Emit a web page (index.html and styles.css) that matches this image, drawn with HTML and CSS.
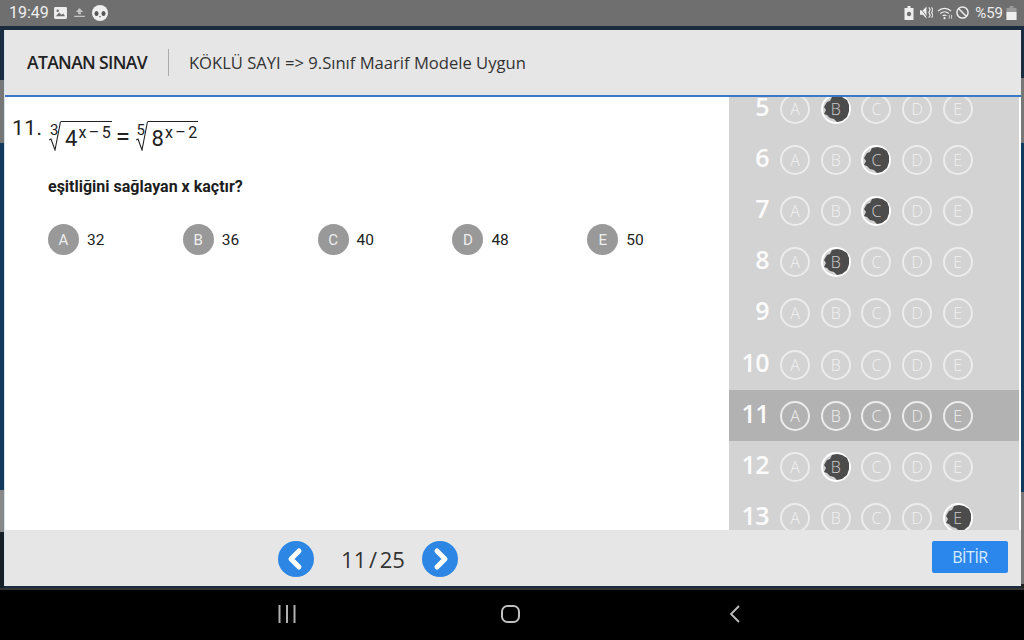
FILE: index.html
```html
<!DOCTYPE html>
<html lang="tr">
<head>
<meta charset="utf-8">
<title>Atanan Sınav</title>
<link rel="stylesheet" href="styles.css">
</head>
<body>
<svg class="defs" width="0" height="0" aria-hidden="true">
  <symbol id="blob" viewBox="0 0 30 30">
    <path d="M3 13 L6 8 L9 7 L11 3 L16 2 L21 3 L26 6 L28 11 L28 17 L26 23 L21 27 L16 28 L13 25 L9 24 L6 21 L3 20 L5 16 Z"/>
  </symbol>
</svg>
<div class="status">
  <div class="status-left">
    <span class="clock">19:49</span>
    <svg class="ic" width="13" height="12" viewBox="0 0 14 13"><rect width="14" height="13" rx="1.5" fill="#eee"/><path d="M2 10 L5.5 6 L8 8.5 L10 7 L12 10Z" fill="#6f6f6f"/><circle cx="4" cy="4" r="1.3" fill="#6f6f6f"/></svg>
    <svg class="ic" width="11" height="9" viewBox="0 0 12 10"><path d="M6 0 L10 4.5 H7.5 V7 H4.500 V4.500 H2Z M0 8.500 H12 V10 H0Z" fill="#c4c4c4"/></svg>
    <svg class="ic" width="16" height="16" viewBox="0 0 16 16"><circle cx="8" cy="8" r="8" fill="#eee"/><ellipse cx="4.500" cy="8.500" rx="2" ry="2.500" fill="#555"/><ellipse cx="11.500" cy="8.500" rx="2" ry="2.500" fill="#555"/><path d="M7 11 H9 L8 12.500Z" fill="#555"/></svg>
  </div>
  <div class="status-right">
    <svg width="10" height="14" viewBox="0 0 9 14"><path d="M3 0 H6 V2 H9 V14 H0 V2 H3Z" fill="#eee"/><circle cx="4.500" cy="8" r="2.200" fill="#6f6f6f"/></svg>
    <svg class="s-mute" width="13" height="13" viewBox="0 0 14 13"><path d="M0 4 H3 L7 0 V13 L3 9 H0Z" fill="#eee"/><path d="M0 1 L8 12" stroke="#6f6f6f" stroke-width="1"/><path d="M9.500 1 L11 3.500 L9.500 6.500 L11 9.500 L9.500 12 M12.500 1 L14 3.500 L12.500 6.500 L14 9.500 L12.500 12" fill="none" stroke="#eee" stroke-width="1.200"/></svg>
    <svg width="16" height="14" viewBox="0 0 17 14"><path d="M1 5 A10 10 0 0 1 15 5 M3.500 7.500 A7 7 0 0 1 12.500 7.500 M6 10 A3.500 3.500 0 0 1 10 10" fill="none" stroke="#eee" stroke-width="1.300"/><circle cx="8" cy="12.500" r="1.200" fill="#eee"/><path d="M13 9 V13 M15.500 9 V13" stroke="#ddd"/></svg>
    <svg class="s-block" width="13" height="13" viewBox="0 0 14 14"><circle cx="7" cy="7" r="6" fill="none" stroke="#eee" stroke-width="1.600"/><path d="M3 3 L11 11" stroke="#eee" stroke-width="1.600"/></svg>
    <span class="pct">%59</span>
    <svg class="s-batt" width="11" height="14" viewBox="0 0 10 14"><path d="M3 0 H7 V2 H10 V14 H0 V2 H3Z" fill="#9a9a9a"/><path d="M0 6 H10 V14 H0Z" fill="#eee"/></svg>
  </div>
</div>
<main class="stage">
  <div class="window">
    <header class="head">
      <h1 class="head-title">ATANAN SINAV</h1>
      <span class="head-sub">KÖKLÜ SAYI =&gt; 9.Sınıf Maarif Modele Uygun</span>
    </header>
    <div class="body">
      <section class="question">
        <div class="q-top">
          <span class="q-num">11.</span>
          <div class="math">
            <span class="root"><span class="idx">3</span><svg class="rad" width="12" height="30" viewBox="0 0 12 30"><path d="M0 19 L2 18 L6 29 L11.500 .5" fill="none" stroke="#222" stroke-width="1.100"/></svg><span class="radicand">4<sup class="exp">x – 5</sup></span></span>
            <span class="eq">=</span>
            <span class="root"><span class="idx">5</span><svg class="rad" width="12" height="30" viewBox="0 0 12 30"><path d="M0 19 L2 18 L6 29 L11.500 .5" fill="none" stroke="#222" stroke-width="1.100"/></svg><span class="radicand">8<sup class="exp">x – 2</sup></span></span>
          </div>
        </div>
        <p class="q-text">eşitliğini sağlayan x kaçtır?</p>
        <div class="options">
          <div class="opt"><span class="opt-mark">A</span><span>32</span></div>
          <div class="opt"><span class="opt-mark">B</span><span>36</span></div>
          <div class="opt"><span class="opt-mark">C</span><span>40</span></div>
          <div class="opt"><span class="opt-mark">D</span><span>48</span></div>
          <div class="opt"><span class="opt-mark">E</span><span>50</span></div>
        </div>
      </section>
      <aside class="sheet">
        <div class="sheet-list">
          <div class="row"><span class="n">5</span><span class="b">A</span><span class="b on"><svg><use href="#blob"/></svg><i>B</i></span><span class="b">C</span><span class="b">D</span><span class="b">E</span></div>
          <div class="row"><span class="n">6</span><span class="b">A</span><span class="b">B</span><span class="b on"><svg><use href="#blob"/></svg><i>C</i></span><span class="b">D</span><span class="b">E</span></div>
          <div class="row"><span class="n">7</span><span class="b">A</span><span class="b">B</span><span class="b on"><svg><use href="#blob"/></svg><i>C</i></span><span class="b">D</span><span class="b">E</span></div>
          <div class="row"><span class="n">8</span><span class="b">A</span><span class="b on"><svg><use href="#blob"/></svg><i>B</i></span><span class="b">C</span><span class="b">D</span><span class="b">E</span></div>
          <div class="row"><span class="n">9</span><span class="b">A</span><span class="b">B</span><span class="b">C</span><span class="b">D</span><span class="b">E</span></div>
          <div class="row"><span class="n">10</span><span class="b">A</span><span class="b">B</span><span class="b">C</span><span class="b">D</span><span class="b">E</span></div>
          <div class="row current"><span class="n">11</span><span class="b">A</span><span class="b">B</span><span class="b">C</span><span class="b">D</span><span class="b">E</span></div>
          <div class="row"><span class="n">12</span><span class="b">A</span><span class="b on"><svg><use href="#blob"/></svg><i>B</i></span><span class="b">C</span><span class="b">D</span><span class="b">E</span></div>
          <div class="row"><span class="n">13</span><span class="b">A</span><span class="b">B</span><span class="b">C</span><span class="b">D</span><span class="b on"><svg><use href="#blob"/></svg><i>E</i></span></div>
        </div>
      </aside>
    </div>
    <footer class="foot">
      <div class="pager">
        <svg width="36" height="36" viewBox="0 0 36 36"><circle cx="18" cy="18" r="18" fill="#2e86e4"/><path d="M21 10 L13 18 L21 26" fill="none" stroke="#fff" stroke-width="5" stroke-linecap="round" stroke-linejoin="round"/></svg>
        <span class="count">11 / 25</span>
        <svg width="36" height="36" viewBox="0 0 36 36"><circle cx="18" cy="18" r="18" fill="#2e86e4"/><path d="M15 10 L23 18 L15 26" fill="none" stroke="#fff" stroke-width="5" stroke-linecap="round" stroke-linejoin="round"/></svg>
      </div>
      <button class="finish">BİTİR</button>
    </footer>
  </div>
</main>
<nav class="navbar">
  <svg width="18" height="18" viewBox="0 0 18 18"><path d="M1.500 0 V18 M9 0 V18 M16.500 0 V18" stroke="#b0b0b0" stroke-width="2"/></svg>
  <svg width="19" height="18" viewBox="0 0 19 18"><rect x="1" y="1" width="17" height="16" rx="5.500" fill="none" stroke="#c0c0c0" stroke-width="2"/></svg>
  <svg width="11" height="18" viewBox="0 0 11 18"><path d="M10 1 L2 9 L10 17" fill="none" stroke="#c0c0c0" stroke-width="1.800"/></svg>
</nav>
</body>
</html>
```
FILE: styles.css
```css
* { box-sizing: border-box; }
html, body { margin: 0; height: 100%; }
body {
  width: 1024px;
  height: 640px;
  overflow: hidden;
  display: flex;
  flex-direction: column;
  background: #000;
  font-family: "Open Sans", "Liberation Sans", sans-serif;
}
.defs { position: absolute; }

.status {
  height: 26px;
  flex: none;
  background: #6f6f6f;
  display: flex;
  justify-content: space-between;
  align-items: center;
  padding: 0 7px 1px 9px;
  color: #eee;
  font-family: Roboto, sans-serif;
}
.status-left, .status-right { display: flex; align-items: center; }
.status-left { gap: 7px; }
.status-right { gap: 4px; }
.clock { font-size: 16px; margin-right: -2px; }
.pct { font-size: 15px; margin-left: 2px; }
.s-mute { margin-left: 2px; }
.s-block { margin-left: -1px; }
.s-batt { margin-left: -1px; }

.stage {
  flex: none;
  height: 562px;
  padding: 4px 3px 2px 4px;
  background-color: #1b2c40;
  background-image:
    linear-gradient(#1b2c40 0 54px, #777 54px 117px, #123a5c 117px 464px, #888 464px 506px, #152028 506px),
    linear-gradient(#1b2c40 0 52px, #777 52px 117px, #123a5c 117px 466px, #777 466px 558px, #222 558px);
  background-size: 4px 100%, 3px 100%;
  background-position: left top, right top;
  background-repeat: no-repeat;
}
.window {
  height: 100%;
  display: flex;
  flex-direction: column;
  background: #e6e6e6;
  border-left: 1px solid #d5e3ee;
}

.head {
  height: 67px;
  flex: none;
  display: flex;
  align-items: center;
  border-bottom: 2px solid #3a78c8;
  padding: 0 0 1px 22px;
  color: #222;
}
.head-title {
  margin: 0;
  font-size: 17.500px;
  font-weight: 600;
  letter-spacing: -.65px;
  padding-right: 21px;
  border-right: 1px solid #aaa;
  line-height: 27px;
}
.head-sub { font-size: 16.600px; margin: 1px 0 0 20px; color: #333; }

.body { flex: 1; min-height: 0; display: flex; background: #fff; }
.question { flex: 1; padding: 18px 0 0 8px; font-family: Roboto, sans-serif; color: #222; }
.q-top { display: flex; height: 42px; }
.q-num { font-size: 21px; letter-spacing: .5px; width: 36px; margin-left: -1px; line-height: 26px; }
.math { display: flex; align-items: flex-start; font-size: 22px; padding-top: 6px; }
.root { display: flex; align-items: flex-start; }
.idx { font-size: 15px; line-height: 16px; margin: 1px -9.400px 0 2px; }
.rad { flex: none; }
.radicand {
  border-top: 1px solid #222;
  line-height: 34px;
  height: 30px;
  padding: 0 1px 0 4px;
}
.exp { font-size: 16px; line-height: 14px; vertical-align: 8px; margin-left: 1px; word-spacing: -1.500px; }
.eq { font-size: 26px; margin: 2px 4.400px 0 4px; line-height: 26px; }
.q-text { margin: 20px 0 0 35px; font-size: 16px; font-weight: 700; line-height: 20px; color: #1d1d1d; }
.options { display: flex; margin: 27px 0 0 35px; }
.opt {
  width: 134.800px;
  display: flex;
  align-items: center;
  gap: 8px;
  font-size: 15.500px;
}
.opt-mark {
  width: 31px;
  height: 31px;
  border-radius: 50%;
  background: #999;
  color: #eee;
  display: flex;
  align-items: center;
  justify-content: center;
  font-size: 15px;
}

.sheet {
  width: 290px;
  flex: none;
  margin-right: 2px;
  background: #d3d3d3;
  overflow: hidden;
}
.sheet-list { margin-top: -14px; }
.row {
  height: 51.200px;
  display: flex;
  align-items: center;
  color: #f1f1f1;
}
.row.current { background: #b2b2b2; }
.n {
  width: 40px;
  margin-right: 11px;
  text-align: right;
  font-size: 25px;
  letter-spacing: -.5px;
  font-weight: 600;
  color: #fbfbfb;
  margin-top: -6px;
}
.b {
  width: 30px;
  height: 30px;
  margin-right: 10.700px;
  flex: none;
  border: 2px solid #ececec;
  border-radius: 50%;
  display: flex;
  align-items: center;
  justify-content: center;
  font-size: 16px;
  font-weight: 300;
  position: relative;
}
.b.on { border-color: #fff; }
.b i { font-style: normal; position: relative; color: #ccc; }
.b svg {
  position: absolute;
  inset: -2px;
  width: 30px;
  height: 30px;
  fill: #4c4c4c;
}

.foot {
  height: 56px;
  flex: none;
  display: flex;
  align-items: center;
  justify-content: space-between;
  padding: 2px 13px 0 273px;
}
.pager { display: flex; align-items: center; }
.count {
  width: 108px;
  padding-left: 10px;
  text-align: center;
  font-size: 22px;
  word-spacing: -3px;
  color: #333;
}
.finish {
  width: 76px;
  height: 32px;
  margin-top: -4px;
  border: 0;
  border-radius: 2px;
  background: #2c87ec;
  color: #d8ecff;
  font: 400 16px "Open Sans", sans-serif;
  letter-spacing: -.5px;
  padding: 0;
}

.navbar {
  flex: 1;
  background: #000;
  display: grid;
  grid-template-columns: 296px 224px 220px;
  justify-items: end;
  align-items: center;
  padding-bottom: 2px;
  border-top: 2px solid #333;
}
```
